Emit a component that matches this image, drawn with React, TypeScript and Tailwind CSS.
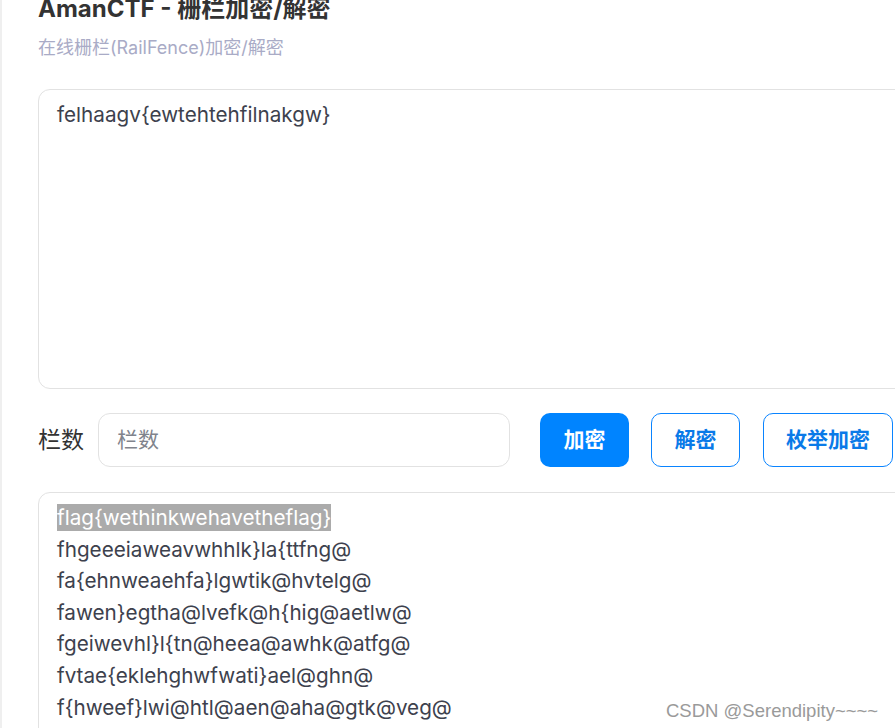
import React from "react";

const lines = [
  "fhgeeeiaweavwhhlk}la{ttfng@",
  "fa{ehnweaehfa}lgwtik@hvtelg@",
  "fawen}egtha@lvefk@h{hig@aetlw@",
  "fgeiwevhl}l{tn@heea@awhk@atfg@",
  "fvtae{eklehghwfwati}ael@ghn@",
  "f{hweef}lwi@htl@aen@aha@gtk@veg@",
];

export default function App() {
  const inter = { fontFamily: "Inter, 'Noto Sans CJK SC', sans-serif" } as React.CSSProperties;
  return (
    <div
      className="relative w-[895px] h-[728px] overflow-hidden bg-white border-l-2 border-[#efefef]"
      style={inter}
    >
      <div className="pl-[36px] w-[1000px]">
        <h1 className="mt-[-6px] text-[24px] leading-[30px] font-bold text-[#333333]">
          AmanCTF - 栅栏加密/解密
        </h1>
        <p className="mt-[12px] text-[18px] leading-[24px] text-[#a9abc6]">
          在线栅栏(RailFence)加密/解密
        </p>
        <div className="mt-[29px] h-[300px] rounded-[12px] border border-[#e2e2e2] px-[18px] pt-[11px] text-[20.7px] leading-[28px] text-[#3d414d]">
          felhaagv{"{"}ewtehtehfilnakgw{"}"}
        </div>
        <div className="mt-[24px] flex items-center">
          <span className="text-[23px] text-[#333333]">栏数</span>
          <div className="ml-[14px] w-[412px] h-[54px] rounded-[12px] border border-[#e2e2e2] flex items-center pl-[18px] text-[21px] text-[#80838c]">
            栏数
          </div>
          <button className="ml-[30px] w-[89px] h-[54px] rounded-[10px] bg-[#0084ff] text-white text-[21px] font-bold">
            加密
          </button>
          <button className="ml-[22px] w-[89px] h-[54px] rounded-[10px] border border-[#0a84ff] text-[#0a7ae8] text-[21px] font-bold">
            解密
          </button>
          <button className="ml-[23px] w-[130px] h-[54px] rounded-[10px] border border-[#0a84ff] text-[#0a7ae8] text-[21px] font-bold">
            枚举加密
          </button>
        </div>
        <div className="mt-[25px] h-[300px] rounded-[12px] border border-[#e2e2e2] px-[18px] pt-[9px] text-[20.7px] leading-[31.6px] text-[#3d414d]">
          <div>
            <span className="bg-[#ababab] text-white py-[1px]">flag{"{"}wethinkwehavetheflag{"}"}</span>
          </div>
          {lines.map((l) => (
            <div key={l}>{l}</div>
          ))}
        </div>
      </div>
      <div
        className="absolute left-[664px] top-[697px] text-[18.5px] text-[#9a9a9a]"
        style={{ fontFamily: "'Liberation Sans', Arial, sans-serif", textShadow: "1px 1px 0 #fff" }}
      >
        CSDN @Serendipity~~~~
      </div>
    </div>
  );
}
